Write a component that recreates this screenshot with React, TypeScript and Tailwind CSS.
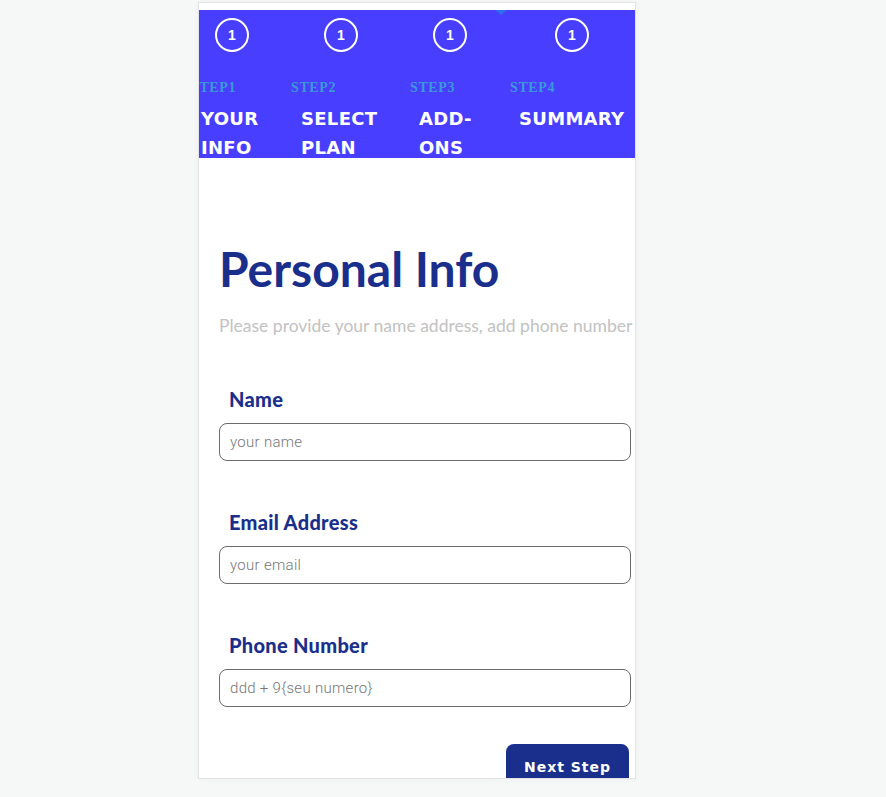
import React from "react";

const steps = [
  { label: "STEP1", title: ["YOUR", "INFO"], w: "w-[100px]" },
  { label: "STEP2", title: ["SELECT", "PLAN"], w: "w-[118px]" },
  { label: "STEP3", title: ["ADD-", "ONS"], w: "w-[100px]" },
  { label: "STEP4", title: ["SUMMARY"], w: "w-[117px]" },
];

const fields = [
  { label: "Name", placeholder: "your name", type: "text" },
  { label: "Email Address", placeholder: "your email", type: "email" },
  { label: "Phone Number", placeholder: "ddd + 9{seu numero}", type: "tel" },
];

function Circle({ className }: { className?: string }) {
  return (
    <div
      className={`flex h-[34px] w-[34px] items-center justify-center rounded-full border-2 border-white text-[14px] font-bold text-white font-['Liberation_Sans',sans-serif] ${className ?? ""}`}
    >
      1
    </div>
  );
}

export default function App() {
  return (
    <div className="min-h-screen w-full bg-[#f6f8f7] pt-[2px]">
      <div className="ml-[198px] h-[777px] w-[438px] overflow-hidden border border-[#e3e3e3] bg-white pt-[7px] shadow-[0_0_6px_rgba(0,0,0,0.04)]">
        {/* Steps band */}
        <div className="relative h-[148px] overflow-hidden bg-[#483eff]">
          <div className="absolute left-[296px] top-0 h-0 w-0 border-x-[6px] border-t-[5px] border-x-transparent border-t-[#2f6ef0]" />
          <div className="flex pl-[16px] pt-[8px]">
            <Circle />
            <Circle className="ml-[75px]" />
            <Circle className="ml-[75px]" />
            <Circle className="ml-[88px]" />
          </div>
          <div className="flex pl-[2px] pt-[27px]">
            {steps.map((s, i) => (
              <div key={s.label} className={`${s.w} shrink-0`}>
                <div
                  className={`${i < 2 ? "-ml-[10px]" : "-ml-[9px]"} text-[14px] font-bold leading-[18px] tracking-[0.6px] text-[#3b99d8] font-['Liberation_Serif',serif]`}
                >
                  {s.label}
                </div>
                <div className="mt-[7px] text-[18px] font-bold leading-[29px] tracking-[0.3px] text-white font-['DejaVu_Sans',sans-serif]">
                  {s.title.map((t) => (
                    <div key={t}>{t}</div>
                  ))}
                </div>
              </div>
            ))}
          </div>
        </div>

        {/* Form */}
        <div className="pl-[20px] pr-[4px] pt-[83px] font-['Lato',sans-serif]">
          <h1 className="text-[48px] font-bold leading-[56px] text-[#1a2f8c]">
            Personal Info
          </h1>
          <p className="mt-[17px] whitespace-nowrap text-[17.5px] leading-[24px] text-[#c2c2c2]">
            Please provide your name address, add phone number
          </p>

          <div className="mt-[48px] flex flex-col gap-[48px]">
            {fields.map((f) => (
              <div key={f.label} className="flex flex-col">
                <label className="pl-[10px] text-[20px] font-black leading-[26px] tracking-[0.3px] text-[#1a2f8c]">
                  {f.label}
                </label>
                <input
                  type={f.type}
                  placeholder={f.placeholder}
                  className="mt-[11px] h-[38px] w-full rounded-[8px] border border-[#6b6b6b] px-[10px] text-[15px] font-light tracking-[0.3px] font-['Roboto',sans-serif] placeholder:text-[#767676] outline-none"
                />
              </div>
            ))}
          </div>

          <div className="mt-[37px] flex justify-end pr-[2px]">
            <button className="h-[48px] w-[123px] rounded-[8px] bg-[#1a2f8c] pb-[1px] text-[14px] font-bold tracking-[1px] text-white font-['DejaVu_Sans',sans-serif]">
              Next Step
            </button>
          </div>
        </div>
      </div>
    </div>
  );
}
